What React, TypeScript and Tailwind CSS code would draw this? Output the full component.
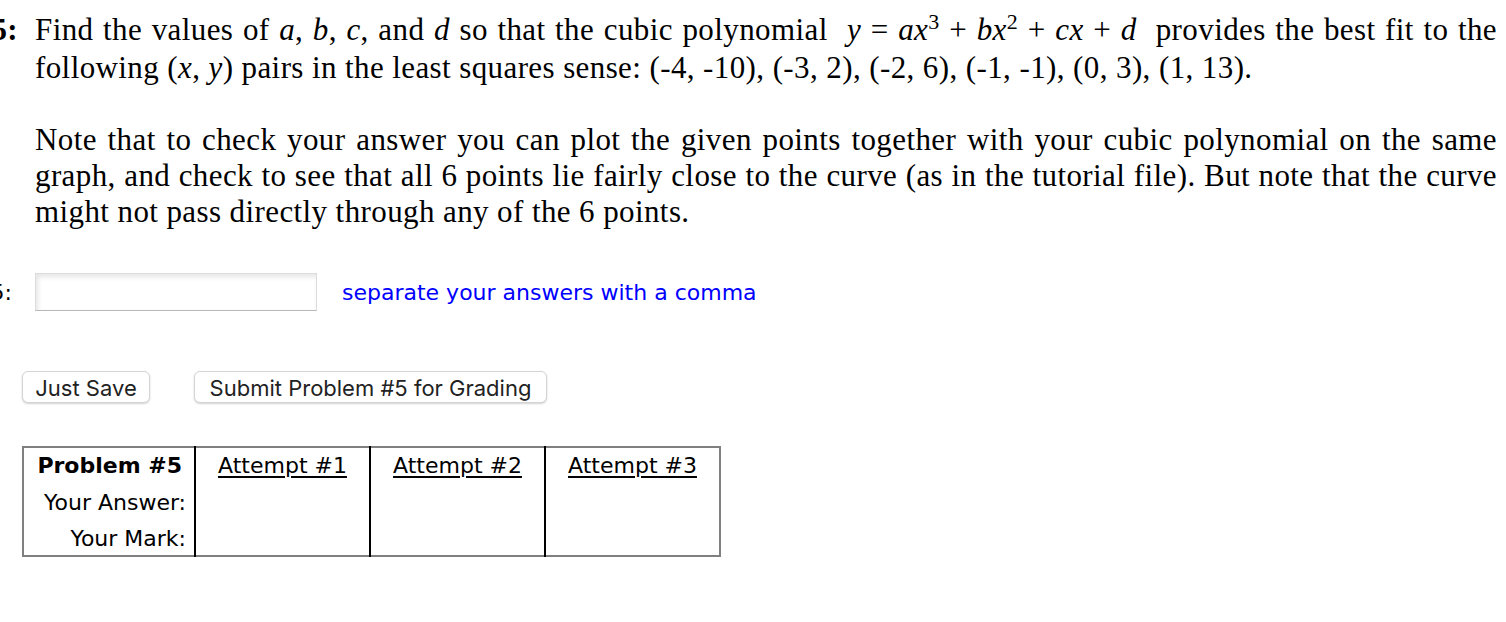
import React from 'react';

const serif = "font-['Liberation_Serif','Times_New_Roman',serif]";
const sans = "font-['DejaVu_Sans','Verdana',sans-serif]";

const V: React.FC<{ children: React.ReactNode }> = ({ children }) => <i>{children}</i>;

const App: React.FC = () => {
  return (
    <div className="min-h-screen w-[1506px] bg-white text-black">
      {/* Question text */}
      <div className={`flex pt-[11px] ${serif} text-[31px] tracking-[0.4px]`}>
        <div className="w-[35px] shrink-0 flex justify-end pr-[17px]">
          <span className="font-bold whitespace-nowrap leading-[37px]">5:</span>
        </div>
        <div className="w-[1462px]">
          <p className="text-justify leading-[38px]">
            Find the values of <V>a</V>, <V>b</V>, <V>c</V>, and <V>d</V> so that the cubic polynomial&nbsp;{' '}
            <V>y</V> = <V>ax</V>
            <sup className="text-[22px] leading-none">3</sup> + <V>bx</V>
            <sup className="text-[22px] leading-none">2</sup> + <V>cx</V> + <V>d</V>&nbsp; provides the best fit to the
            following (<V>x</V>, <V>y</V>) pairs in the least squares sense: (-4, -10), (-3, 2), (-2, 6), (-1, -1), (0, 3),
            (1, 13).
          </p>
          <p className="text-justify leading-[36px] mt-[35px]">
            Note that to check your answer you can plot the given points together with your cubic polynomial on the same
            graph, and check to see that all 6 points lie fairly close to the curve (as in the tutorial file). But note
            that the curve might not pass directly through any of the 6 points.
          </p>
        </div>
      </div>

      {/* Answer row */}
      <div className={`flex items-center mt-[43px] ${sans} text-[22px]`}>
        <div className="w-[35px] shrink-0 flex justify-end pr-[23px]">
          <span className="whitespace-nowrap">5:</span>
        </div>
        <input
          type="text"
          className="w-[282px] h-[38px] bg-white border border-[#dcdcdc] border-b-[#b8b8b8] shadow-[inset_2px_3px_5px_rgba(0,0,0,0.10)] outline-none px-2"
        />
        <span className="ml-[25px] text-[#0000ff]">separate your answers with a comma</span>
      </div>

      {/* Buttons */}
      <div className="flex items-center gap-[44px] pl-[22px] mt-[60px] font-['Inter','Liberation_Sans',sans-serif] text-[22px] text-[#222]">
        <button className="w-[128px] h-[32px] rounded-[6px] bg-white border border-[#d4d4d4] shadow-[0_1px_2px_rgba(0,0,0,0.18)]">
          Just Save
        </button>
        <button className="w-[353px] h-[32px] rounded-[6px] bg-white border border-[#d4d4d4] shadow-[0_1px_2px_rgba(0,0,0,0.18)]">
          Submit Problem #5 for Grading
        </button>
      </div>

      {/* Attempts table */}
      <div className="pl-[22px] mt-[43px]">
        <table className={`border-collapse border-2 border-[#808080] ${sans} text-[22px]`}>
          <tbody>
            <tr className="h-[36px]">
              <th className="w-[172px] text-right font-bold pr-[12px] border-r-2 border-r-black">Problem #5</th>
              <td className="w-[175px] text-center border-r-2 border-r-black">
                <span className="underline underline-offset-[3px]">Attempt #1</span>
              </td>
              <td className="w-[175px] text-center border-r-2 border-r-black">
                <span className="underline underline-offset-[3px]">Attempt #2</span>
              </td>
              <td className="w-[175px] text-center">
                <span className="underline underline-offset-[3px]">Attempt #3</span>
              </td>
            </tr>
            <tr className="h-[38px]">
              <td className="text-right pr-[8px] border-r-2 border-r-black">Your Answer:</td>
              <td className="border-r-2 border-r-black"></td>
              <td className="border-r-2 border-r-black"></td>
              <td></td>
            </tr>
            <tr className="h-[35px]">
              <td className="text-right pr-[8px] border-r-2 border-r-black">Your Mark:</td>
              <td className="border-r-2 border-r-black"></td>
              <td className="border-r-2 border-r-black"></td>
              <td></td>
            </tr>
          </tbody>
        </table>
      </div>
    </div>
  );
};

export default App;
